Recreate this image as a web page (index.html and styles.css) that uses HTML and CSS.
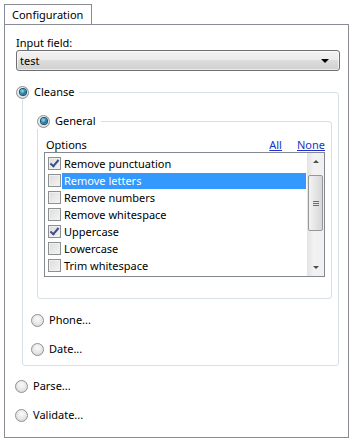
FILE: index.html
```html
<!DOCTYPE html>
<html lang="en">

<head>
    <meta charset="UTF-8">
    <title>Configuration</title>
    <link rel="stylesheet" href="styles.css">
</head>

<body>
    <div class="wrap">
        <!-- Tab header -->
        <div class="tabs">
            <div class="tab">Configuration</div>
        </div>

        <div class="panel">
            <div class="field-label">Input field:</div>
            <div class="dropdown">
                <span>test</span>
                <span class="drop-arrow"></span>
            </div>

            <!-- Cleanse group -->
            <fieldset class="group group-cleanse">
                <legend><span class="radio checked"></span>Cleanse</legend>

                <fieldset class="group group-general">
                    <legend><span class="radio checked"></span>General</legend>

                    <div class="options-head">
                        <span>Options</span>
                        <span class="links"><a href="#">All</a><a href="#">None</a></span>
                    </div>

                    <div class="list">
                        <div class="items">
                            <div class="item"><span class="check checked"></span><span class="text">Remove punctuation</span></div>
                            <div class="item selected"><span class="check"></span><span class="text">Remove letters</span></div>
                            <div class="item"><span class="check"></span><span class="text">Remove numbers</span></div>
                            <div class="item"><span class="check"></span><span class="text">Remove whitespace</span></div>
                            <div class="item"><span class="check checked"></span><span class="text">Uppercase</span></div>
                            <div class="item"><span class="check"></span><span class="text">Lowercase</span></div>
                            <div class="item"><span class="check"></span><span class="text">Trim whitespace</span></div>
                        </div>
                        <!-- Scrollbar -->
                        <div class="scrollbar">
                            <span class="arrow up"></span>
                            <div class="track">
                                <div class="thumb"><span class="grip"></span></div>
                            </div>
                            <span class="arrow down"></span>
                        </div>
                    </div>
                </fieldset>

                <div class="option sub"><span class="radio"></span>Phone...</div>
                <div class="option sub"><span class="radio"></span>Date...</div>
            </fieldset>

            <div class="option top"><span class="radio"></span>Parse...</div>
            <div class="option top"><span class="radio"></span>Validate...</div>
        </div>
    </div>
</body>

</html>
```

FILE: styles.css
```css
/* General Styles */
body {
    margin: 0;
    font-family: 'Noto Sans', 'Open Sans', sans-serif;
    font-size: 11px;
    color: #000;
    background: #fff;
}

.wrap {
    padding: 4px 0 0 4px;
}

/* Tab header */
.tabs {
    display: flex;
    height: 20px;
}

.tab {
    width: 88px;
    height: 20px;
    box-sizing: border-box;
    border: 1px solid #898c95;
    border-bottom: none;
    background: #fff;
    padding-left: 7px;
    line-height: 19px;
    position: relative;
    z-index: 1;
    margin-bottom: -1px;
}

/* Tab page */
.panel {
    width: 345px;
    height: 414px;
    box-sizing: border-box;
    border: 1px solid #898c95;
    padding: 10px 8px 0 11px;
}

.field-label {
    line-height: 15px;
    height: 15px;
}

/* Combo box */
.dropdown {
    height: 21px;
    box-sizing: border-box;
    border: 1px solid #707070;
    border-radius: 3px;
    background: linear-gradient(#f2f2f2 0%, #ebebeb 50%, #dddddd 50%, #cfcfcf 100%);
    display: flex;
    align-items: center;
    justify-content: space-between;
    padding: 0 10px 0 3px;
    box-shadow: inset 0 0 0 1px rgba(255, 255, 255, 0.6);
}

.drop-arrow {
    width: 0;
    height: 0;
    border-left: 4px solid transparent;
    border-right: 4px solid transparent;
    border-top: 4px solid #000;
    margin-top: 1px;
}

/* Group boxes */
.group {
    border: 1px solid #d5dfe5;
    border-radius: 3px;
    padding: 0;
    min-width: 0;
    box-shadow: inset 1px 1px 0 #fff;
}

.group legend {
    display: flex;
    align-items: center;
    height: 16px;
    line-height: 16px;
    padding: 0 5px 0 0;
    margin-left: -7px;
}

.group-cleanse {
    margin: 13px 1px 0 6px;
    height: 282px;
    box-sizing: border-box;
}

.group-general {
    margin: 13px 6px 0 14px;
    height: 186px;
    box-sizing: border-box;
    padding: 0 6px 0 6px;
}

/* Radio buttons */
.radio {
    width: 11px;
    height: 11px;
    border: 1px solid #8e8f8f;
    border-radius: 50%;
    background: radial-gradient(circle at 50% 35%, #fbfbfb 0%, #e4e4e4 60%, #cfcfcf 100%);
    margin-right: 5px;
    display: inline-flex;
    justify-content: center;
    align-items: center;
    flex-shrink: 0;
}

.radio.checked::after {
    content: "";
    width: 6px;
    height: 6px;
    border-radius: 50%;
    background: radial-gradient(circle at 40% 35%, #9fe2f7 0%, #2b8cb5 45%, #0d3f5e 100%);
    box-shadow: 0 0 0 1px #1d4d69;
}

.option {
    display: flex;
    align-items: center;
    height: 16px;
    line-height: 16px;
}

.option.sub {
    margin: 13px 0 0 8px;
}

.option.top {
    margin: 12px 0 0 -1px;
}

.option.top + .option.top {
    margin-top: 13px;
}

/* Options header */
.options-head {
    display: flex;
    justify-content: space-between;
    align-items: center;
    height: 14px;
    line-height: 14px;
    margin: 9px 0 0 0;
    padding-left: 2px;
}

.links a {
    color: #2232c8;
    text-decoration: underline;
    margin-left: 15px;
}

/* Checked list */
.list {
    margin-top: 0;
    height: 125px;
    box-sizing: border-box;
    border: 1px solid #828790;
    display: flex;
    background: #fff;
}

.items {
    flex: 1;
    padding: 2px 1px 0 3px;
}

.item {
    display: flex;
    align-items: center;
    height: 17px;
}

.item .text {
    padding: 0 3px 0 2px;
    line-height: 16px;
    flex: 1;
}

.item.selected .text {
    background: #3399ff;
    color: #fff;
}

.check {
    width: 11px;
    height: 11px;
    border: 1px solid #8e8f8f;
    background: linear-gradient(135deg, #dcdcdc 0%, #f4f4f4 100%);
    box-shadow: inset 0 0 0 1px #f0f0f0;
    margin-right: 1px;
    flex-shrink: 0;
    position: relative;
}

.check.checked::after {
    content: "";
    position: absolute;
    left: 3px;
    top: 0px;
    width: 3px;
    height: 7px;
    border-right: 2px solid #3b4f8f;
    border-bottom: 2px solid #3b4f8f;
    transform: rotate(40deg);
}

/* Scrollbar */
.scrollbar {
    width: 17px;
    display: flex;
    flex-direction: column;
    background: linear-gradient(90deg, #e3e3e3, #f2f2f2 40%, #f0f0f0);
}

.arrow {
    height: 17px;
    display: flex;
    justify-content: center;
    align-items: center;
}

.arrow.up::after {
    content: "";
    border-left: 3px solid transparent;
    border-right: 3px solid transparent;
    border-bottom: 3px solid #4d4d4d;
}

.arrow.down::after {
    content: "";
    border-left: 3px solid transparent;
    border-right: 3px solid transparent;
    border-top: 3px solid #4d4d4d;
}

.track {
    flex: 1;
    padding-top: 5px;
}

.thumb {
    height: 56px;
    margin: 0 1px;
    box-sizing: border-box;
    border: 1px solid #979797;
    border-radius: 2px;
    background: linear-gradient(90deg, #f3f3f3, #e5e5e5 50%, #d6d6d6);
    display: flex;
    justify-content: center;
    align-items: center;
}

.grip {
    width: 6px;
    height: 5px;
    background: repeating-linear-gradient(#6d6d6d 0 1px, transparent 1px 2px);
}
```
